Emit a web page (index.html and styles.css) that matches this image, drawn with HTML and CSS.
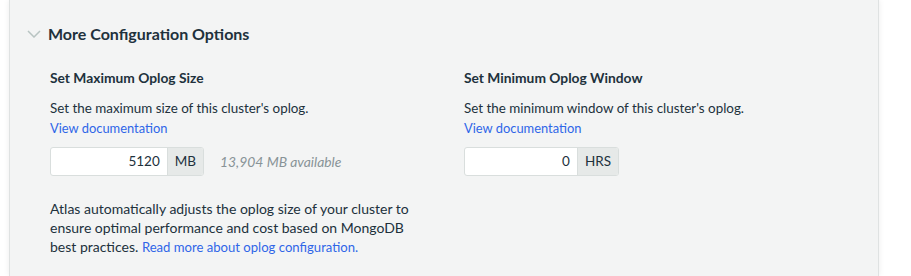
FILE: index.html
```html
<!DOCTYPE html>
<html>
<head>
<meta charset="utf-8">
<link rel="stylesheet" href="styles.css">
</head>
<body>
<div class="panel">
  <div class="header">
    <svg class="chevron" width="14" height="8" viewBox="0 0 14 8"><path d="M1 1 L7 7 L13 1" fill="none" stroke="#b8c4c2" stroke-width="1.5"/></svg>
    <h2 class="title">More Configuration Options</h2>
  </div>
  <div class="columns">
    <div class="col">
      <h3 class="sub">Set Maximum Oplog Size</h3>
      <p class="desc">Set the maximum size of this cluster's oplog.</p>
      <a class="link" href="#">View documentation</a>
      <div class="field-row">
        <div class="field field-mb">
          <span class="value">5120</span>
          <span class="unit">MB</span>
        </div>
        <span class="avail">13,904 MB available</span>
      </div>
      <p class="note">Atlas automatically adjusts the oplog size of your cluster to ensure optimal performance and cost based on MongoDB best practices. <a class="link" href="#">Read more about oplog configuration.</a></p>
    </div>
    <div class="col">
      <h3 class="sub">Set Minimum Oplog Window</h3>
      <p class="desc">Set the minimum window of this cluster's oplog.</p>
      <a class="link" href="#">View documentation</a>
      <div class="field-row">
        <div class="field field-hrs">
          <span class="value">0</span>
          <span class="unit">HRS</span>
        </div>
      </div>
    </div>
  </div>
</div>
</body>
</html>
```
FILE: styles.css
```css
html, body {
  margin: 0;
  padding: 0;
  background: #ffffff;
  height: 100%;
  overflow: hidden;
}
body {
  font-family: "Lato", "Noto Sans", sans-serif;
  color: #21313c;
}
.panel {
  margin-left: 9px;
  width: 868px;
  height: 100%;
  background: #f3f4f4;
  border-left: 1px solid #dfe2e2;
  border-right: 1px solid #dfe2e2;
  box-shadow: 0 0 6px rgba(0,0,0,0.08);
  box-sizing: content-box;
}
.header {
  display: flex;
  align-items: center;
  padding: 24px 0 0 17px;
  height: 20px;
}
.chevron {
  display: block;
  margin-right: 7px;
}
.title {
  margin: 0;
  font-size: 16px;
  font-weight: 700;
  color: #21313c;
  line-height: 20px;
}
.columns {
  display: grid;
  grid-template-columns: 414px 1fr;
  padding-left: 40px;
  padding-top: 25px;
}
.col {
  display: flex;
  flex-direction: column;
  align-items: flex-start;
}
.sub {
  margin: 0;
  font-size: 13.8px;
  font-weight: 700;
  line-height: 18px;
}
.desc {
  margin: 12px 0 0;
  font-size: 13.4px;
  line-height: 18px;
  color: #21313c;
}
.link {
  color: #2f66e8;
  text-decoration: none;
  font-size: 12.9px;
  line-height: 22px;
}
.field-row {
  display: flex;
  align-items: center;
  margin-top: 8px;
}
.field {
  display: flex;
  height: 29px;
  box-sizing: border-box;
  border: 1px solid #d9dedd;
  border-radius: 3px;
  background: #ffffff;
  overflow: hidden;
  font-size: 13.5px;
}
.field-mb { width: 154px; }
.field-hrs { width: 155px; }
.value {
  flex: 1;
  text-align: right;
  padding-right: 7px;
  line-height: 27px;
}
.unit {
  background: #e6e9e8;
  border-left: 1px solid #d9dedd;
  padding: 0 7px;
  line-height: 27px;
  color: #21313c;
}
.avail {
  margin-left: 16px;
  font-size: 13.9px;
  font-style: italic;
  color: #889397;
}
.note {
  margin: 23px 0 0;
  font-size: 14px;
  line-height: 19px;
  width: 375px;
}
.note .link {
  font-size: 13.1px;
  line-height: 18px;
}
```
